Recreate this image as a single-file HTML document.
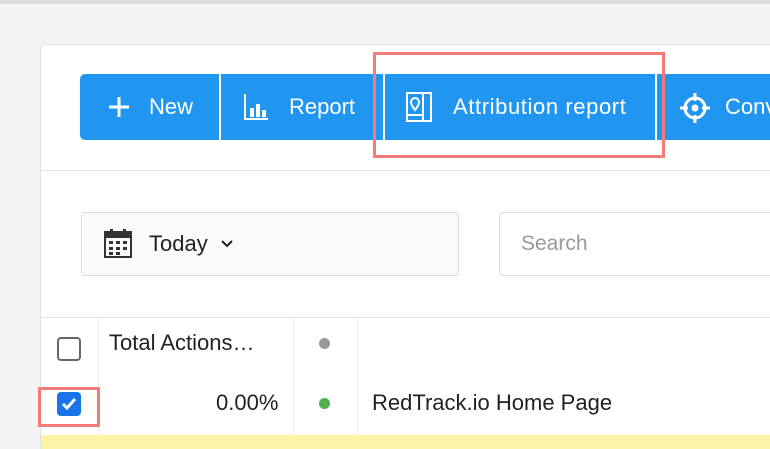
<!DOCTYPE html><html><head><style>
html,body{margin:0;width:770px;height:449px;overflow:hidden}
body{background:#f4f4f4;font-family:"Liberation Sans",sans-serif;position:relative}
.a{position:absolute}
</style></head><body>
<div class="a" style="left:0;top:0;width:770px;height:4px;background:#dcdcdc"></div>
<div class="a" style="left:40px;top:44px;width:740px;height:410px;background:#fff;border:1px solid #e2e2e2;border-radius:4px"></div>
<div class="a" style="left:80px;top:74px;width:700px;height:66px;background:#2196f0;border-radius:5px"></div>
<div class="a" style="left:219px;top:74px;width:2px;height:66px;background:#fff"></div>
<div class="a" style="left:383px;top:74px;width:2px;height:66px;background:#fff"></div>
<div class="a" style="left:655px;top:74px;width:2px;height:66px;background:#fff"></div>
<svg class="a" style="left:108px;top:96px" width="22" height="22"><path d="M11 1V21M1 11H21" stroke="#fff" stroke-width="3"/></svg>
<div class="a" style="left:149px;top:92px;color:#fff;font-size:22px;line-height:30px">New</div>
<svg class="a" style="left:243px;top:92px" width="26" height="30" viewBox="0 0 26 30" fill="none" stroke="#fff" stroke-width="2"><path d="M2 2V27H25"/><rect x="7" y="16" width="4" height="9" fill="#fff" stroke="none"/><rect x="13" y="12" width="4" height="13" fill="#fff" stroke="none"/><rect x="19" y="18" width="4" height="7" fill="#fff" stroke="none"/></svg>
<div class="a" style="left:289px;top:92px;color:#fff;font-size:22px;line-height:30px">Report</div>
<svg class="a" style="left:406px;top:92px" width="26" height="30" viewBox="0 0 26 30" fill="none" stroke="#fff" stroke-width="2"><rect x="1" y="1" width="24" height="28"/><path d="M17 1V29M1 23H17"/><path d="M9 18C5 13 5 11 5 10a4 4 0 0 1 8 0c0 1 0 3-4 8z"/></svg>
<div class="a" style="left:453px;top:92px;color:#fff;font-size:22px;line-height:30px;letter-spacing:0.6px">Attribution report</div>
<svg class="a" style="left:679px;top:92px" width="32" height="32" viewBox="0 0 32 32" fill="none" stroke="#fff" stroke-width="3"><circle cx="16" cy="16" r="10"/><circle cx="16" cy="16" r="2" fill="#fff"/><path d="M16 1V9M16 23V31M1 16H9M23 16H31"/></svg>
<div class="a" style="left:725px;top:92px;color:#fff;font-size:22px;line-height:30px">Conv</div>
<div class="a" style="left:373px;top:52px;width:286px;height:100px;border:3px solid #f47b78"></div>
<div class="a" style="left:41px;top:170px;width:730px;height:1px;background:#e6e6e6"></div>
<div class="a" style="left:81px;top:212px;width:376px;height:62px;border:1px solid #dadada;border-radius:4px;background:#fafafa"></div>
<svg class="a" style="left:104px;top:228px" width="28" height="30" viewBox="0 0 28 30"><rect x="1" y="4" width="26" height="25" fill="none" stroke="#333" stroke-width="2"/><rect x="1" y="4" width="26" height="6" fill="#333"/><rect x="6" y="1" width="3" height="5" fill="#333"/><rect x="19" y="1" width="3" height="5" fill="#333"/><g fill="#333"><rect x="5" y="13" width="4" height="3"/><rect x="12" y="13" width="4" height="3"/><rect x="19" y="13" width="4" height="3"/><rect x="5" y="19" width="4" height="3"/><rect x="12" y="19" width="4" height="3"/><rect x="19" y="19" width="4" height="3"/><rect x="5" y="24" width="4" height="3"/><rect x="12" y="24" width="4" height="3"/></g></svg>
<div class="a" style="left:149px;top:229px;color:#222;font-size:22px;line-height:30px">Today</div>
<svg class="a" style="left:220px;top:239px" width="14" height="10"><path d="M2 2l5 5 5-5" stroke="#222" stroke-width="2" fill="none"/></svg>
<div class="a" style="left:499px;top:212px;width:280px;height:62px;border:1px solid #dadada;border-radius:4px"></div>
<div class="a" style="left:521px;top:230px;color:#999;font-size:21px;line-height:28px">Search</div>
<div class="a" style="left:41px;top:317px;width:730px;height:1px;background:#e6e6e6"></div>
<div class="a" style="left:98px;top:318px;width:1px;height:131px;background:#ededed"></div>
<div class="a" style="left:293px;top:318px;width:1px;height:131px;background:#ededed"></div>
<div class="a" style="left:357px;top:318px;width:1px;height:131px;background:#ededed"></div>
<div class="a" style="left:41px;top:435px;width:730px;height:14px;background:#fdf3a6"></div>
<div class="a" style="left:57px;top:337px;width:24px;height:24px;border:2px solid #666;border-radius:4px;box-sizing:border-box"></div>
<div class="a" style="left:109px;top:328px;color:#222;font-size:22px;line-height:30px">Total Actions…</div>
<div class="a" style="left:319px;top:338px;width:11px;height:11px;border-radius:50%;background:#999"></div>
<div class="a" style="left:57px;top:392px;width:24px;height:24px;background:#1a73e8;border-radius:4px"></div>
<svg class="a" style="left:57px;top:392px" width="24" height="24"><path d="M6 12l4 4 8-9" stroke="#fff" stroke-width="3" fill="none"/></svg>
<div class="a" style="left:38px;top:387px;width:56px;height:34px;border:3px solid #f47b78"></div>
<div class="a" style="left:216px;top:388px;color:#222;font-size:22px;line-height:30px">0.00%</div>
<div class="a" style="left:319px;top:398px;width:11px;height:11px;border-radius:50%;background:#4caf50"></div>
<div class="a" style="left:372px;top:388px;color:#222;font-size:22px;line-height:30px">RedTrack.io Home Page</div>
</body></html>
